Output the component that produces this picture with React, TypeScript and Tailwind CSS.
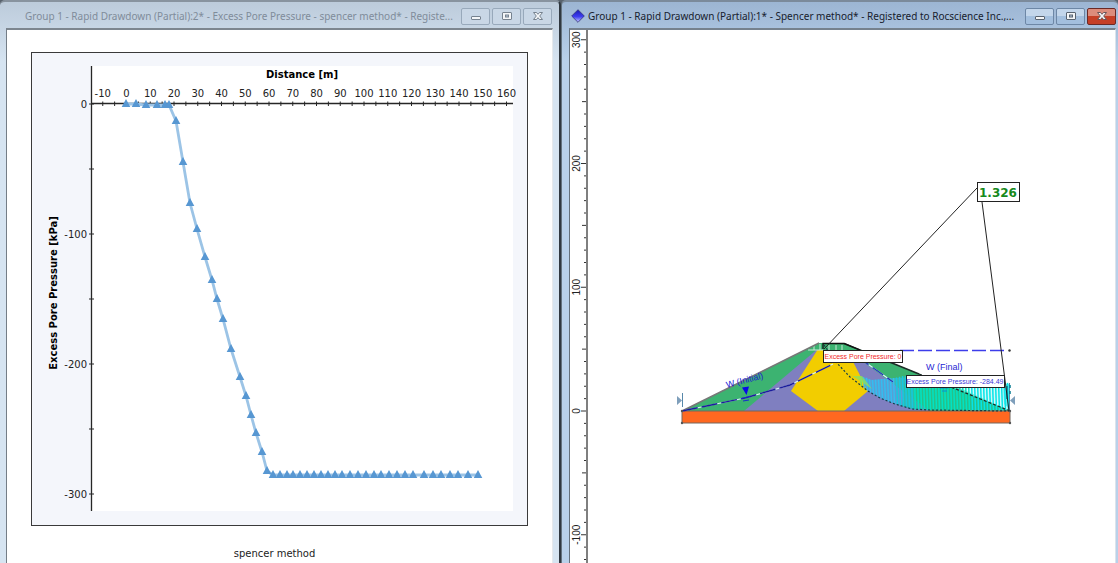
import React from "react";

type Point = [number, number];

const pressurePoints: Point[] = [
  [126, 104], [136, 104], [146, 105], [157, 105], [165, 105], [169, 105],
  [176, 121], [183, 162], [190, 203], [197, 229], [205, 257], [212, 280],
  [217, 299], [223, 319], [231, 349], [240, 377], [246, 396], [251, 415],
  [256, 433], [262, 452], [267, 471],
  ...[273, 280, 287, 293, 300, 307, 314, 321, 328, 335, 342, 350, 358, 366, 374, 381, 389, 397, 405, 413, 424, 433, 441, 450, 458, 468, 478].map(
    (x): Point => [x, 475],
  ),
];

const distances = Array.from({ length: 18 }, (_, i) => (i - 1) * 10);
const distanceTicks = Array.from({ length: 35 }, (_, i) => (i - 2) * 5);
const pressures = [0, -100, -200, -300];
const pressureTicks = [0, -50, -100, -150, -200, -250, -300];
const distanceX = (d: number) => 126.5 + d * 2.375;
const pressureY = (p: number) => 104 - p * 1.3;
const toPath = (points: Point[]) => points.map(([x, y]) => `${x},${y}`).join(" ");

function WindowButtons({ active }: { active: boolean }) {
  const base = "flex h-[17px] w-[29px] items-center justify-center rounded-[2px] border";
  const plain = active
    ? "border-[#6d87a6] bg-linear-to-b from-[#c3d6eb] from-50% to-[#a3bfde] to-50%"
    : "border-[#98a9bb] bg-[#c9d7e6]";
  const close = active
    ? "border-[#6b2a26] bg-linear-to-b from-[#dc8c7c] from-45% to-[#c53f26] to-50%"
    : plain;
  const stroke = active ? "#59636f" : "#76828f";
  return (
    <div className="flex shrink-0 gap-[2px]">
      <button type="button" aria-label="Minimize" className={`${base} ${plain}`}>
        <svg width="12" height="11" viewBox="0 0 12 11">
          <rect x="1.5" y="5.5" width="9" height="3" rx="0.5" fill="#f4f6f8" stroke={stroke} />
        </svg>
      </button>
      <button type="button" aria-label="Maximize" className={`${base} ${plain}`}>
        <svg width="12" height="11" viewBox="0 0 12 11">
          <rect x="1.5" y="1.5" width="9" height="7" rx="0.5" fill="#f4f6f8" stroke={stroke} />
          <rect x="4.5" y="4" width="3" height="2" fill="#b5c7da" stroke={stroke} />
        </svg>
      </button>
      <button type="button" aria-label="Close" className={`${base} ${close}`}>
        <svg width="12" height="11" viewBox="0 0 12 11">
          <path
            d="M1.5 1.5H4.5L6 3.3L7.5 1.5H10.5L7.7 5L10.5 8.5H7.5L6 6.7L4.5 8.5H1.5L4.3 5Z"
            fill="#f4f6f8"
            stroke={active ? "#6b5558" : stroke}
          />
        </svg>
      </button>
    </div>
  );
}

function PressureChart() {
  return (
    <svg viewBox="32 53 495 472" className="block h-auto w-full" role="img" aria-label="Excess pore pressure by distance">
      <rect x="91" y="66" width="422" height="445" fill="#fff" />
      <g stroke="#262626" strokeWidth="1">
        <path d="M91.5 66V511M91 103.5H513" strokeWidth="1.3" />
        {distanceTicks.map((d) => (
          <line key={d} x1={distanceX(d)} x2={distanceX(d)} y1="101.5" y2="106" />
        ))}
        {pressureTicks.map((p) => (
          <line key={p} x1="89" x2="94" y1={pressureY(p)} y2={pressureY(p)} />
        ))}
      </g>
      <g className="font-['DejaVu_Sans',sans-serif] text-[10px]" fill="#222">
        {distances.map((d) => (
          <text key={d} x={distanceX(d)} y="97" textAnchor="middle">{d}</text>
        ))}
        {pressures.map((p) => (
          <text key={p} x="87" y={pressureY(p) + 4} textAnchor="end">{p}</text>
        ))}
      </g>
      <g className="font-['DejaVu_Sans',sans-serif] text-[10px] font-bold" fill="#000" textAnchor="middle">
        <text x="302" y="78">Distance [m]</text>
        <text transform="translate(57 293) rotate(-90)">Excess Pore Pressure [kPa]</text>
      </g>
      <polyline points={toPath(pressurePoints)} fill="none" stroke="#9cc4e6" strokeWidth="2.8" />
      <g fill="#5797d2">
        {pressurePoints.map(([x, y]) => (
          <path key={x} d={`M${x} ${y - 5}L${x + 4.3} ${y + 3}H${x - 4.3}Z`} />
        ))}
      </g>
    </svg>
  );
}

const rulerValues = [300, 200, 100, 0, -100];
const rulerTicks = Array.from({ length: 43 }, (_, i) => 300 - i * 10);
const rulerY = (v: number) => 411 - v * 1.2375;

// The slip surface, from the crest down to the toe of the dam.
const slip: Point[] = [
  [824, 345], [836, 362], [850, 377], [868, 391], [880, 398], [895, 404],
  [912, 409], [930, 410], [1009, 411],
];
const hatchTop: Point[] = [
  [842, 368], [856, 377], [866, 377], [872, 380], [895, 378], [904, 376], [950, 379], [1000, 382], [1010, 383],
];

function heightAt(points: Point[], x: number) {
  for (let i = 1; i < points.length; i += 1) {
    const [x0, y0] = points[i - 1];
    const [x1, y1] = points[i];
    if (x <= x1) return y0 + ((y1 - y0) * (x - x0)) / (x1 - x0);
  }
  return points[points.length - 1][1];
}

const hatchXs = Array.from({ length: 50 }, (_, i) => 861.5 + i * 3);

function hatchColor(x: number) {
  if (x < 864) return "#67e36d";
  if (x < 896) return "#35bdf0";
  if (x < 915) return "#16c8e0";
  return x < 970 ? "#00e2c4" : "#05e4e8";
}

function Ruler() {
  return (
    <g>
      <path d="M587 30V563" stroke="#555" strokeWidth="1.5" />
      {rulerTicks.map((v) => {
        const start = v % 100 === 0 ? 581 : v % 50 === 0 ? 582 : 584;
        return <path key={v} d={`M${start} ${rulerY(v)}H586`} stroke="#333" />;
      })}
      <g className="font-['Liberation_Sans',sans-serif] text-[10px]" fill="#222" textAnchor="middle">
        {rulerValues.map((v) => (
          <text key={v} transform={`translate(580 ${rulerY(v)}) rotate(-90)`}>{v}</text>
        ))}
      </g>
    </g>
  );
}

function SlopeModel() {
  return (
    <svg viewBox="570 30 545 533" className="block h-auto w-full" role="img" aria-label="Dam slope stability model">
      <Ruler />
      <path d="M682 411L819 343H844L1010 411Z" fill="#3cb371" />
      <path d="M744 411L820 347H843L930 411Z" fill="#7f7fc0" />
      <path d="M820 346H845L868 391L844 411H818L791 391Z" fill="#f2cd00" />
      <path d="M808 350L820 343.5H844L859 350Z" fill="#3cb371" />
      <path d="M808 350H823M814 346V350M820 344V350M829 345V350M836 345V350M842 345V350" stroke="#c9e9d8" fill="none" />
      <rect x="682" y="411" width="328" height="12" fill="#ff6820" />

      <path d="M940 379L1000 382L1010 384V411Z" fill="#baf7f5" opacity="0.7" />
      <path d="M862 377L872 380L895 378L915 377L915 409L895 404L880 398L866 389Z" fill="#3fb4e0" opacity="0.6" />
      <path d="M905 377L940 379L1008 410L930 410L912 409L902 406Z" fill="#18c99a" opacity="0.6" />
      <g strokeWidth="1.5">
        {hatchXs.map((x) => (
          <line key={x} x1={x - 1} x2={x} y1={heightAt(hatchTop, x)} y2={heightAt(slip, x)} stroke={hatchColor(x)} />
        ))}
      </g>
      <path d="M842 369L852 376L862 376L872 389Z" fill="#8ce15c" opacity="0.8" />
      <path d="M1003 384H1010V409L1004 404Z" fill="#13e4ea" opacity="0.6" />

      <path d="M682 411L819 343" stroke="#777" strokeWidth="1.5" />
      <path d="M844 343.5L919 374" stroke="#1d2b26" strokeWidth="1.5" />
      <path d="M919 374L1010 411" stroke="#1d2b26" strokeWidth="1.3" strokeDasharray="3 2" />
      <path d="M823 349V343.5H844L860 350" stroke="#111" strokeWidth="1.3" fill="none" />
      <path d="M682 423V411H1010V423Z" stroke="#75665c" fill="none" />
      <polyline points={toPath(slip)} fill="none" stroke="#153c45" strokeWidth="1.2" strokeDasharray="2 2" />

      <path d="M682 411L745 398L790 385L833 364" fill="none" stroke="#d9f5f5" strokeWidth="1.2" />
      <path d="M682 411L745 398L790 385L833 364" fill="none" stroke="#1c1c9c" strokeWidth="1.4" strokeDasharray="16 4" />
      <path d="M858 357L893 382" stroke="#dcefff" strokeWidth="1.2" />
      <path d="M858 357L893 382" stroke="#2236b8" strokeWidth="1.4" strokeDasharray="13 5" />
      <path d="M900 350.5H1006" stroke="#3d3dea" strokeWidth="1.3" strokeDasharray="14 4" />
      <circle cx="1009.5" cy="350.5" r="1.2" fill="#333" />

      <path d="M742 387.5L749 386.5L746.5 395Z" fill="#0808e8" />
      <path d="M741 398.5L750 396.5M743 401L749 400" stroke="#172bd0" />
      <path d="M940 388H948M942 391H947" stroke="#098ed3" />
      <text transform="translate(727 388) rotate(-15)" className="font-['Liberation_Sans',sans-serif] text-[9px]" fill="#2020d4">W (Initial)</text>
      <text x="926" y="370" className="font-['Liberation_Sans',sans-serif] text-[9px]" fill="#2727d4">W (Final)</text>

      <path d="M682.5 393V407M1009.5 383V411" stroke="#5788aa" />
      <path d="M677 396V405L682 400.5ZM1015 396V405L1010 400.5Z" fill="#7f9fbb" />
      <path d="M1010 385V388M1010 391V394M1007 386V399" stroke="#087c93" strokeWidth="1.5" />
      <g fill="#555">
        <circle cx="682" cy="411" r="1.2" />
        <circle cx="682" cy="423" r="1.2" />
        <circle cx="1010" cy="411" r="1.2" />
        <circle cx="1010" cy="423" r="1.2" />
      </g>

      <path d="M824 349L977 188M982 202L1009 411" stroke="#222" strokeWidth="1" />
      <rect x="977.5" y="182.5" width="42" height="19" fill="#fff" stroke="#222" />
      <text x="998" y="197" textAnchor="middle" className="font-['DejaVu_Sans',sans-serif] text-[12px] font-bold" fill="#168a1c">1.326</text>

      <g className="font-['Liberation_Sans',sans-serif] text-[7px]" textAnchor="middle">
        <rect x="823.5" y="350.5" width="79" height="12" fill="#fff" stroke="#222" />
        <text x="863" y="359" fill="#f22a2a">Excess Pore Pressure: 0</text>
        <rect x="906.5" y="375.5" width="98" height="12" fill="#fff" stroke="#222" />
        <text x="955" y="384" fill="#3a3ad8">Excess Pore Pressure: -284.49</text>
      </g>
    </svg>
  );
}

export default function App() {
  return (
    <main className="grid min-h-screen grid-cols-[561fr_557fr] overflow-hidden bg-[#59636e] font-['Noto_Sans',sans-serif]">
      <section className="flex min-w-0 flex-col rounded-t-[5px] border-t-2 border-r-2 border-t-[#88939f] border-r-[#303840] bg-linear-to-b from-[#bccbdb] to-[#d6e4f1] to-[60px] pr-[6px] pl-[6px]">
        <header className="flex h-[26px] items-center justify-between pt-[4px] pb-[2px] pr-[1px] pl-[19px]">
          <h1 className="text-[10px] leading-4 whitespace-nowrap text-[#7f8c9a]">
            Group 1 - Rapid Drawdown (Partial):2* - Excess Pore Pressure - spencer method* - Registe...
          </h1>
          <WindowButtons active={false} />
        </header>
        <div className="grow border-t-2 border-r border-l border-t-[#7d868f] border-r-[#e6e9ec] border-l-[#747d86] bg-white px-[24px] pt-[22px]">
          <figure>
            <div className="border border-[#3a3a3a] bg-[#f4f6fb]">
              <PressureChart />
            </div>
            <figcaption className="pt-[20px] pr-[10px] text-center font-['DejaVu_Sans',sans-serif] text-[10px] leading-4 text-[#222]">
              spencer method
            </figcaption>
          </figure>
        </div>
      </section>
      <section className="flex min-w-0 flex-col rounded-t-[5px] border-t-2 border-l border-t-[#7b8a9b] border-l-[#65737f] bg-linear-to-b from-[#9cb5d3] to-[#b9d1ea] to-[60px] pr-[2px] pl-[7px]">
        <header className="flex h-[26px] items-center justify-between pt-[4px] pb-[2px] pl-[2px]">
          <div className="flex items-center gap-[3px]">
            <svg width="14" height="14" viewBox="0 0 14 14" className="shrink-0" aria-hidden="true">
              <defs>
                <linearGradient id="gem" x1="0" y1="0" x2="0" y2="1">
                  <stop offset="0" stopColor="#1a1ab4" />
                  <stop offset="0.55" stopColor="#3e3ef0" />
                  <stop offset="1" stopColor="#c8ccff" />
                </linearGradient>
              </defs>
              <path d="M7 0.7L13.3 7L7 13.3L0.7 7Z" fill="url(#gem)" stroke="#33337a" strokeWidth="0.8" />
            </svg>
            <h2 className="text-[10px] leading-4 whitespace-nowrap text-[#17212e]">
              Group 1 - Rapid Drawdown (Partial):1* - Spencer method* - Registered to Rocscience Inc.,...
            </h2>
          </div>
          <WindowButtons active />
        </header>
        <div className="grow border-t-2 border-r border-l border-t-[#75818d] border-r-[#dce3eb] border-l-[#65717c] bg-white">
          <SlopeModel />
        </div>
      </section>
    </main>
  );
}
